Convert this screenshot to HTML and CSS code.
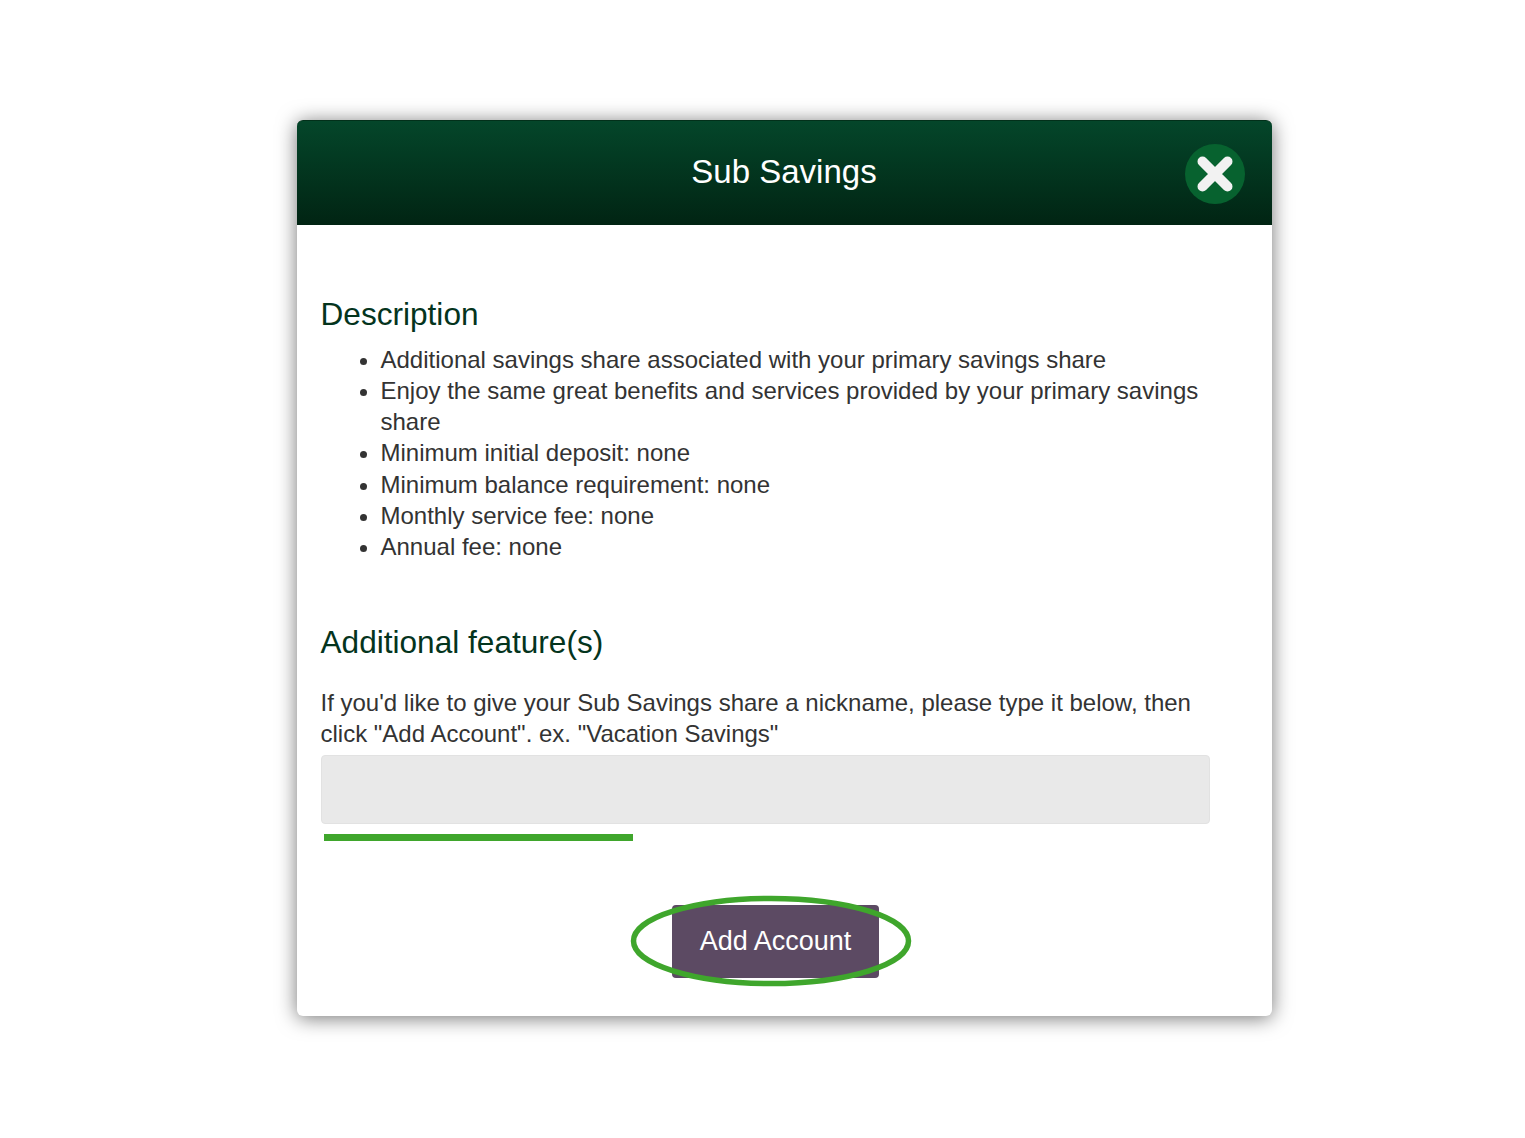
FILE: index.html
```html
<!DOCTYPE html>
<html lang="en">
<head>
    <meta charset="UTF-8">
    <title>Sub Savings</title>
    <link rel="stylesheet" href="styles.css">
</head>
<body>
    <div class="modal">
        <div class="modal-header">
            <h2 class="modal-title">Sub Savings</h2>
            <button class="close-btn" aria-label="Close">
                <svg viewBox="0 0 36 36" width="36" height="36">
                    <path d="M5.5 5.5 L30.5 30.5 M30.5 5.5 L5.5 30.5" stroke="#f2f2f2" stroke-width="10" stroke-linecap="round" fill="none"/>
                </svg>
            </button>
        </div>
        <div class="modal-body">
            <h3 class="section-title">Description</h3>
            <ul class="details">
                <li>Additional savings share associated with your primary savings share</li>
                <li>Enjoy the same great benefits and services provided by your primary savings share</li>
                <li>Minimum initial deposit: none</li>
                <li>Minimum balance requirement: none</li>
                <li>Monthly service fee: none</li>
                <li>Annual fee: none</li>
            </ul>
            <h3 class="section-title features-title">Additional feature(s)</h3>
            <p class="hint">If you'd like to give your Sub Savings share a nickname, please type it below, then click "Add Account". ex. "Vacation Savings"</p>
            <input class="nickname" type="text">
            <div class="underline"></div>
            <div class="actions">
                <div class="action-wrap">
                    <button class="add-btn">Add Account</button>
                    <svg class="ring" viewBox="0 0 282 92" width="282" height="92">
                        <ellipse cx="141" cy="46" rx="137.5" ry="42.5" fill="none" stroke="#3fa62c" stroke-width="5.5"/>
                    </svg>
                </div>
            </div>
        </div>
    </div>
</body>
</html>
```
FILE: styles.css
```css
body {
    margin: 0;
    padding: 120px 0 122px 297px;
    background-color: #fff;
    font-family: "Liberation Sans", Arial, sans-serif;
    color: #333;
}
.modal {
    width: 975px;
    height: 896px;
    background-color: #fff;
    border-radius: 6px;
    box-shadow: 0 2px 20px rgba(0,0,0,0.55);
}
.modal-header {
    height: 105px;
    display: flex;
    align-items: center;
    justify-content: center;
    position: relative;
    background: linear-gradient(to bottom, #04462a, #012413);
    border-top: 1px solid #02301a;
    box-sizing: border-box;
    border-radius: 6px 6px 0 0;
}
.modal-title {
    margin: 0 0 3px -1px;
    color: #fff;
    font-size: 33px;
    font-weight: normal;
}
.close-btn {
    position: absolute;
    top: 23px;
    right: 27px;
    width: 60px;
    height: 60px;
    padding: 0;
    border: none;
    border-radius: 50%;
    background-color: #07622f;
    display: flex;
    align-items: center;
    justify-content: center;
}
.modal-body {
    padding: 70px 24px 0;
}
.section-title {
    margin: 0 0 0 -0.5px;
    color: #04341d;
    font-size: 31.6px;
    font-weight: normal;
    line-height: 38px;
}
.details {
    margin: 10.8px 0 0;
    padding: 0 40px 0 59.5px;
    font-size: 24px;
    line-height: 31.2px;
}
.features-title {
    margin-top: 61.2px;
}
.hint {
    margin: 26px 50px 0 -0.5px;
    font-size: 24px;
    line-height: 31px;
}
.nickname {
    display: block;
    box-sizing: border-box;
    width: 889px;
    height: 69px;
    margin-top: 6px;
    border: 1px solid #e2e2e2;
    border-radius: 4px;
    background-color: #e9e9e9;
}
.underline {
    width: 309px;
    height: 7px;
    margin: 10px 0 0 3px;
    background-color: #3fa62c;
}
.actions {
    display: flex;
    margin-top: 64px;
    padding-left: 351px;
}
.action-wrap {
    position: relative;
}
.add-btn {
    display: block;
    width: 207px;
    height: 73px;
    padding: 0;
    border: none;
    border-radius: 4px;
    background-color: #5c4a63;
    color: #fff;
    font-family: inherit;
    font-size: 27px;
}
.ring {
    position: absolute;
    top: -10px;
    left: -42.5px;
}
```
